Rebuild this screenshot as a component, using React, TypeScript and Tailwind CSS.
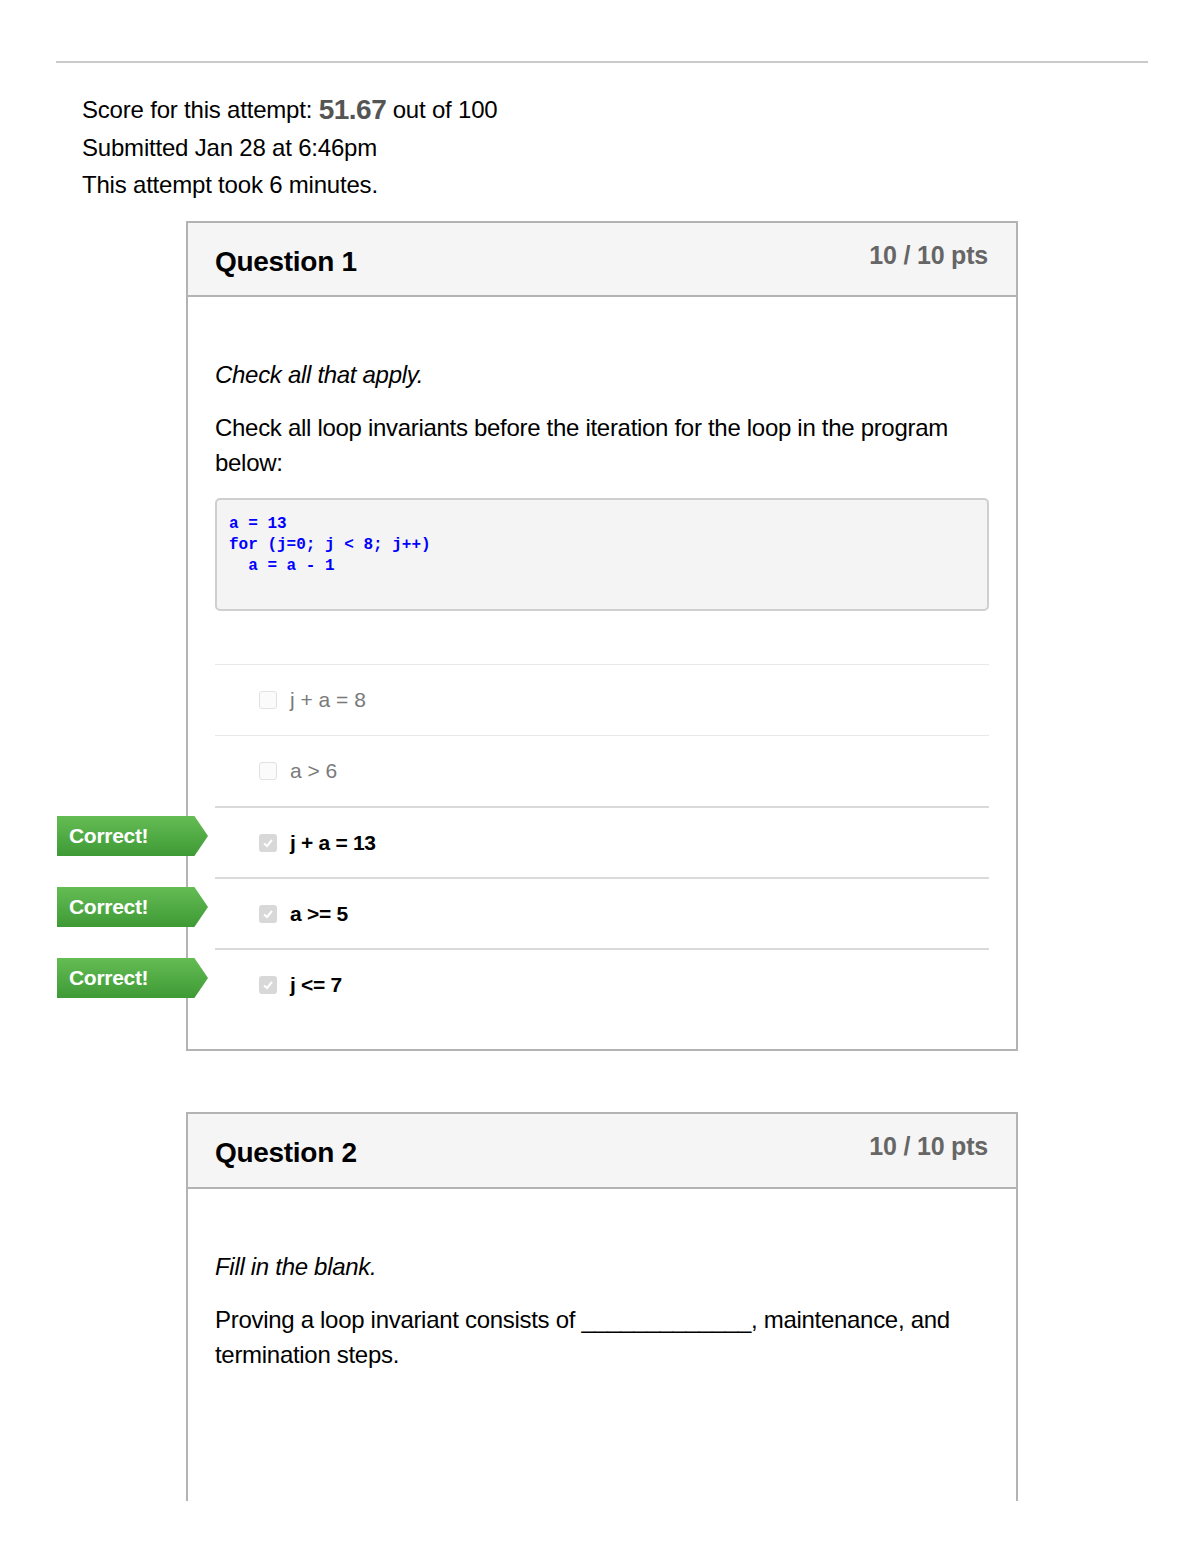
import React from "react";

const F = { fontFamily: '"Liberation Sans", Arial, sans-serif' };

function Flag() {
  return (
    <div className="absolute left-[-158px] top-[8px] flex h-[40px] w-[151px] items-center bg-linear-to-b from-[#64bc53] to-[#3e9a36] pl-[12px] text-[21px] font-bold tracking-[-0.3px] text-white [clip-path:polygon(0_0,91%_0,100%_50%,91%_100%,0_100%)]">
      Correct!
    </div>
  );
}

function Box({ checked }: { checked: boolean }) {
  return checked ? (
    <div className="flex h-[18px] w-[18px] items-center justify-center rounded-[3px] bg-[#d8d8d8]">
      <svg width="12" height="12" viewBox="0 0 12 12">
        <path d="M2 6.5 L5 9 L10 3" stroke="#ffffff" strokeWidth="2" fill="none" />
      </svg>
    </div>
  ) : (
    <div className="h-[18px] w-[18px] rounded-[3px] border border-[#e2e2e2] bg-[#fbfbfb]" />
  );
}

const answers = [
  { t: "j + a = 8", c: false },
  { t: "a > 6", c: false },
  { t: "j + a = 13", c: true },
  { t: "a >= 5", c: true },
  { t: "j <= 7", c: true },
];

export default function App() {
  return (
    <div style={F} className="relative h-[1553px] w-[1200px] overflow-hidden bg-white text-black">
      <div className="pt-[61px]">
        <div className="ml-[56px] mr-[52px] border-t-2 border-[#cbcbcb]" />
        <div className="pl-[82px] pt-[28px] text-[24px] tracking-[-0.2px]">
          <div className="flex h-[38px] items-center">
            Score for this attempt:&nbsp;
            <span className="text-[28px] font-bold tracking-[-0.5px] text-[#555]">51.67</span>
            &nbsp;out of 100
          </div>
          <div className="flex h-[38px] items-center">Submitted Jan 28 at 6:46pm</div>
          <div className="flex h-[36px] items-center">This attempt took 6 minutes.</div>
        </div>

        {/* Question 1 */}
        <div className="relative ml-[186px] mt-[18px] w-[832px] border-2 border-[#b3b3b3]">
          <div className="flex h-[74px] items-start justify-between border-b-2 border-[#b3b3b3] bg-[#f5f5f5] pl-[27px] pr-[28px]">
            <div className="pt-[18px] text-[28px] font-bold tracking-[-0.3px]">Question 1</div>
            <div className="pt-[14px] text-[25px] font-bold tracking-[-0.2px] text-[#666]">10 / 10 pts</div>
          </div>
          <div className="px-[27px] pb-[30px] pt-[60px]">
            <div className="text-[24px] italic tracking-[-0.3px]">Check all that apply.</div>
            <div className="mt-[17px] text-[24px] leading-[35px] tracking-[-0.3px]">
              Check all loop invariants before the iteration for the loop in the program below:
            </div>
            <div className="mt-[18px] h-[113px] rounded-[5px] border-2 border-[#cfcfcf] bg-[#f4f4f4] px-[12px] pt-[14px] font-['Liberation_Mono',monospace] text-[16px] font-bold leading-[21px] text-[#0000ff] whitespace-pre">
              {"a = 13\nfor (j=0; j < 8; j++)\n  a = a - 1"}
            </div>
            <div className="mt-[53px]">
              {answers.map((a, i) => (
                <div
                  key={i}
                  className={`relative flex h-[71px] items-center gap-[13px] pl-[44px] ${
                    i < 2 ? "border-t border-[#e8e8e8]" : "border-t-2 border-[#dadada]"
                  }`}
                >
                  {a.c && <Flag />}
                  <Box checked={a.c} />
                  <span
                    className={
                      a.c
                        ? "text-[21px] font-bold tracking-[-0.3px] text-black"
                        : "text-[21px] text-[#7a7a7a]"
                    }
                  >
                    {a.t}
                  </span>
                </div>
              ))}
            </div>
          </div>
        </div>

        {/* Question 2 */}
        <div className="relative ml-[186px] mt-[61px] h-[389px] w-[832px] border-x-2 border-t-2 border-[#b3b3b3]">
          <div className="flex h-[75px] items-start justify-between border-b-2 border-[#b3b3b3] bg-[#f5f5f5] pl-[27px] pr-[28px]">
            <div className="pt-[18px] text-[28px] font-bold tracking-[-0.3px]">Question 2</div>
            <div className="pt-[14px] text-[25px] font-bold tracking-[-0.2px] text-[#666]">10 / 10 pts</div>
          </div>
          <div className="px-[27px] pt-[60px]">
            <div className="text-[24px] italic tracking-[-0.3px]">Fill in the blank.</div>
            <div className="mt-[17px] text-[24px] leading-[35px] tracking-[-0.3px]">
              Proving a loop invariant consists of _____________, maintenance, and termination steps.
            </div>
          </div>
        </div>
      </div>
    </div>
  );
}
